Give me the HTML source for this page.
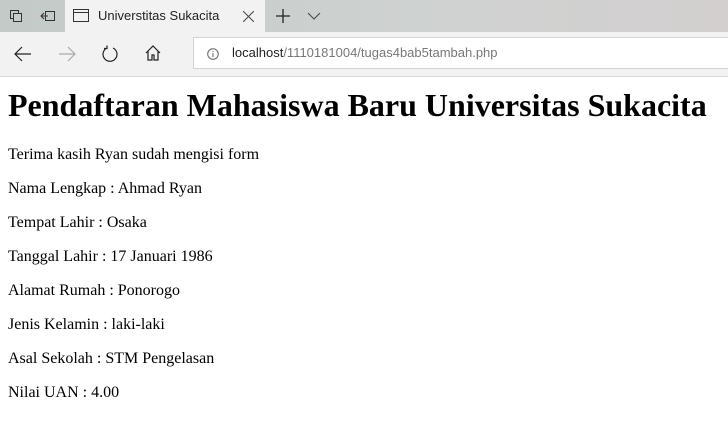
<!DOCTYPE html>
<html><head><style>
body{margin:0;width:728px;height:428px;overflow:hidden;background:#fff;font-family:"Liberation Serif",serif;}
.tabs{position:absolute;top:0;left:0;width:728px;height:32px;background:linear-gradient(90deg,#c3cac8,#cfd2d1 60%,#d3cfcf);}
.tab{position:absolute;left:65px;top:0;width:200px;height:32px;background:#f2f2f2;}
.tb{position:absolute;top:32px;left:0;width:728px;height:44px;background:#f2f2f2;border-bottom:1px solid #d9d9d9;}
.addr{position:absolute;left:193px;top:5px;width:540px;height:32px;background:#fff;border:1px solid #d4d4d4;box-sizing:border-box;font-family:"Liberation Sans",sans-serif;font-size:13px;color:#777;line-height:30px;padding-left:38px;}
.addr b{font-weight:normal;color:#222;}
.ui{font-family:"Liberation Sans",sans-serif;font-size:13px;color:#222;position:absolute;}
.c{position:absolute;top:77px;left:8px;}
h1{font-size:32px;margin:10px 0 0;line-height:36px;}
p{font-size:16px;margin:0;height:34px;line-height:18px;}
</style></head><body>
<div class="tabs">
<svg style="position:absolute;left:9px;top:9px" width="14" height="14" fill="none" stroke="#333"><rect x="1.5" y="1.5" width="8" height="8"/><rect x="4.5" y="4.5" width="8" height="8" fill="#c9cdcc"/></svg>
<svg style="position:absolute;left:40px;top:9px" width="16" height="14" fill="none" stroke="#333"><rect x="5.5" y="2.5" width="9" height="9"/><path d="M1 7h7M4 4l-3 3 3 3"/></svg>
<div class="tab">
<svg style="position:absolute;left:8px;top:9px" width="16" height="14" fill="none" stroke="#333"><rect x="0.5" y="0.5" width="15" height="12"/><path d="M0 3.5h16"/></svg>
<span class="ui" style="left:33px;top:8px">Universtitas Sukacita</span>
<svg style="position:absolute;left:178px;top:11px" width="11" height="11" stroke="#444"><path d="M0 0l11 11M11 0L0 11"/></svg>
</div>
<svg style="position:absolute;left:276px;top:9px" width="14" height="14" stroke="#222" stroke-width="1.3"><path d="M7 0v14M0 7h14"/></svg>
<svg style="position:absolute;left:307px;top:12px" width="14" height="8" fill="none" stroke="#444"><path d="M1 1l6 6 6-6"/></svg>
</div>
<div class="tb">
<svg style="position:absolute;left:14px;top:14px" width="18" height="16" fill="none" stroke="#222" stroke-width="1.2"><path d="M1 8h16M8 1L1 8l7 7"/></svg>
<svg style="position:absolute;left:58px;top:14px" width="18" height="16" fill="none" stroke="#aaa" stroke-width="1.2"><path d="M1 8h16M10 1l7 7-7 7"/></svg>
<svg style="position:absolute;left:102px;top:13px" width="16" height="17" fill="none" stroke="#222" stroke-width="1.2"><path d="M5 3A7 7 0 1 0 11 3M5 0.5v3h-3"/></svg>
<svg style="position:absolute;left:145px;top:13px" width="16" height="16" fill="none" stroke="#222" stroke-width="1.2"><path d="M1 8L8 1l7 7M3 6v9h4v-5h2v5h4V6"/></svg>
<div class="addr"><svg style="position:absolute;left:13px;top:10px" width="12" height="12" fill="none" stroke="#666"><circle cx="6" cy="6" r="5.3"/><path d="M6 5v4M6 3v1"/></svg><b>localhost</b>/1110181004/tugas4bab5tambah.php</div>
</div>
<div class="c">
<h1>Pendaftaran Mahasiswa Baru Universitas Sukacita</h1>
<div style="height:23px"></div>
<p>Terima kasih Ryan sudah mengisi form</p>
<p>Nama Lengkap : Ahmad Ryan</p>
<p>Tempat Lahir : Osaka</p>
<p>Tanggal Lahir : 17 Januari 1986</p>
<p>Alamat Rumah : Ponorogo</p>
<p>Jenis Kelamin : laki-laki</p>
<p>Asal Sekolah : STM Pengelasan</p>
<p>Nilai UAN : 4.00</p>
</div>
</body></html>
